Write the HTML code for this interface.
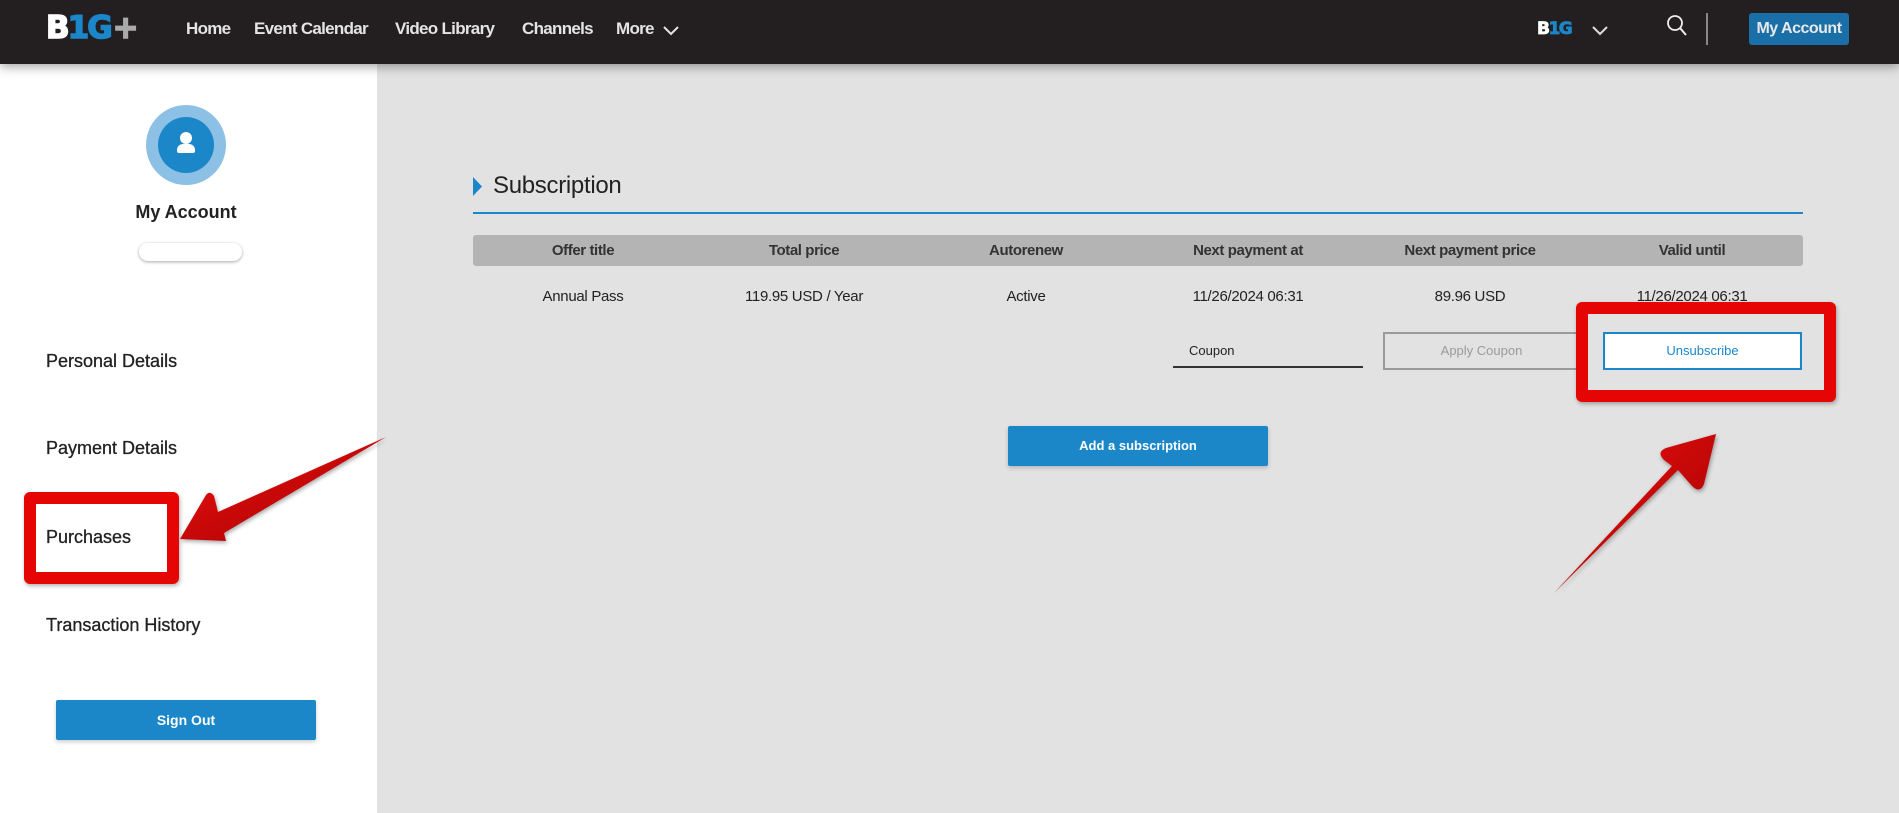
<!DOCTYPE html>
<html><head><meta charset="utf-8"><style>
*{box-sizing:border-box;margin:0;padding:0}
body{width:1899px;height:813px;overflow:hidden;background:#e2e2e2;font-family:"Liberation Sans",sans-serif;position:relative;color:#222}
.a{position:absolute}
.nav{left:0;top:0;width:1899px;height:64px;background:#231f20;box-shadow:0 3px 10px rgba(0,0,0,.35);z-index:5}
.nl{color:#e4e4e4;font-size:17px;font-weight:bold;top:19px;letter-spacing:-0.7px}
.side{left:0;top:64px;width:377px;height:749px;background:#fff}
.mi{left:46px;font-size:18px;color:#222;letter-spacing:0px;-webkit-text-stroke:0.3px #222}
.th{top:235px;font-size:15px;font-weight:bold;color:#333;transform:translateX(-50%);white-space:nowrap;letter-spacing:-0.4px;line-height:31px}
.td{top:288px;font-size:15px;color:#222;transform:translateX(-50%);white-space:nowrap;letter-spacing:-0.3px}
.lg{font-family:"DejaVu Sans","Liberation Sans",sans-serif;font-weight:900}
</style></head><body>
<div class="a nav">
  <div class="a lg" style="left:46px;top:13px;font-size:31px;letter-spacing:-2px;line-height:31px;-webkit-text-stroke:1.5px"><span style="color:#fff;-webkit-text-stroke-color:#fff">B</span><span style="color:#1b87c9;-webkit-text-stroke-color:#1b87c9">1G</span><span style="color:#aaa;margin-left:2px;-webkit-text-stroke-color:#aaa">+</span></div>
  <div class="a nl" style="left:186px">Home</div>
  <div class="a nl" style="left:254px">Event Calendar</div>
  <div class="a nl" style="left:395px">Video Library</div>
  <div class="a nl" style="left:522px">Channels</div>
  <div class="a nl" style="left:616px">More</div>
  <svg class="a" style="left:663px;top:25px" width="16" height="12"><path d="M1 2l7 7 7-7" stroke="#e4e4e4" stroke-width="2" fill="none"/></svg>
  <div class="a lg" style="left:1537px;top:21px;font-size:17px;letter-spacing:-1.5px;line-height:17px;-webkit-text-stroke:0.8px"><span style="color:#fff;-webkit-text-stroke-color:#fff">B</span><span style="color:#1b87c9;-webkit-text-stroke-color:#1b87c9">1G</span></div>
  <svg class="a" style="left:1592px;top:25px" width="16" height="12"><path d="M1 2l7 7 7-7" stroke="#ddd" stroke-width="2" fill="none"/></svg>
  <svg class="a" style="left:1666px;top:14px" width="22" height="24"><circle cx="9" cy="9" r="7" stroke="#eee" stroke-width="1.8" fill="none"/><path d="M14 14l6 7" stroke="#eee" stroke-width="2"/></svg>
  <div class="a" style="left:1706px;top:13px;width:2px;height:32px;background:#888"></div>
  <div class="a" style="left:1749px;top:13px;width:100px;height:32px;background:#1b6fa8;border-radius:3px;color:#e8e8e8;font-size:16px;font-weight:bold;text-align:center;line-height:32px;letter-spacing:-0.5px">My Account</div>
</div>
<div class="a side">
  <div class="a" style="left:146px;top:41px;width:80px;height:80px;border-radius:50%;background:#8cc1e5"></div>
  <div class="a" style="left:158px;top:53px;width:56px;height:56px;border-radius:50%;background:#1b87c9"></div>
  <div class="a" style="left:180px;top:68px;width:12px;height:12px;border-radius:50%;background:#fff"></div>
  <div class="a" style="left:177px;top:80px;width:18px;height:9px;border-radius:6px 6px 2px 2px;background:#fff"></div>
  <div class="a" style="left:0;width:372px;top:138px;text-align:center;font-size:18px;font-weight:bold;color:#222">My Account</div>
  <div class="a" style="left:139px;top:179px;width:103px;height:18px;border-radius:9px;background:#fff;box-shadow:0 1px 3px rgba(0,0,0,.35)"></div>
  <div class="a mi" style="top:287px">Personal Details</div>
  <div class="a mi" style="top:374px">Payment Details</div>
  <div class="a mi" style="top:463px">Purchases</div>
  <div class="a mi" style="top:551px">Transaction History</div>
  <div class="a" style="left:56px;top:636px;width:260px;height:40px;background:#1b87c9;border-radius:2px;color:#fff;font-weight:bold;font-size:14px;text-align:center;line-height:40px;box-shadow:0 2px 4px rgba(0,0,0,.2)">Sign Out</div>
</div>
<div class="a" style="left:24px;top:492px;width:155px;height:92px;border:12px solid #e50505;border-radius:6px;box-shadow:1px 2px 4px rgba(0,0,0,.3)"></div>

<svg class="a" style="left:472px;top:177px" width="12" height="20"><path d="M1 0L10 9.5 1 19z" fill="#1b87c9"/></svg>
<div class="a" style="left:493px;top:172px;font-size:24px;color:#222;letter-spacing:-0.3px">Subscription</div>
<div class="a" style="left:473px;top:212px;width:1330px;height:2px;background:#1b87c9"></div>
<div class="a" style="left:473px;top:235px;width:1330px;height:31px;background:#b4b4b4;border-radius:3px"></div>
<div class="a th" style="left:583px">Offer title</div>
<div class="a th" style="left:804px">Total price</div>
<div class="a th" style="left:1026px">Autorenew</div>
<div class="a th" style="left:1248px">Next payment at</div>
<div class="a th" style="left:1470px">Next payment price</div>
<div class="a th" style="left:1692px">Valid until</div>
<div class="a td" style="left:583px">Annual Pass</div>
<div class="a td" style="left:804px">119.95 USD / Year</div>
<div class="a td" style="left:1026px">Active</div>
<div class="a td" style="left:1248px">11/26/2024 06:31</div>
<div class="a td" style="left:1470px">89.96 USD</div>
<div class="a td" style="left:1692px">11/26/2024 06:31</div>
<div class="a" style="left:1189px;top:343px;font-size:13px;color:#222">Coupon</div>
<div class="a" style="left:1173px;top:366px;width:190px;height:1.5px;background:#333"></div>
<div class="a" style="left:1383px;top:332px;width:197px;height:38px;border:2px solid #9a9a9a;color:#9a9a9a;font-size:13px;text-align:center;line-height:34px">Apply Coupon</div>
<div class="a" style="left:1603px;top:332px;width:199px;height:38px;border:2px solid #1b87c9;background:#fff;color:#1b87c9;font-size:13px;text-align:center;line-height:34px">Unsubscribe</div>
<div class="a" style="left:1576px;top:302px;width:260px;height:100px;border:12px solid #e50505;border-radius:6px;box-shadow:1px 2px 4px rgba(0,0,0,.3)"></div>
<div class="a" style="left:1008px;top:426px;width:260px;height:40px;background:#1b87c9;border-radius:2px;color:#fff;font-weight:bold;font-size:13px;text-align:center;line-height:40px;box-shadow:0 2px 4px rgba(0,0,0,.2)">Add a subscription</div>

<svg class="a" style="left:0;top:0" width="1899" height="813">
<defs><linearGradient id="g" x1="0" y1="0" x2="1" y2="1"><stop offset="0" stop-color="#f01010"/><stop offset="1" stop-color="#a00000"/></linearGradient></defs>
<g style="filter:drop-shadow(1px 2px 2px rgba(0,0,0,.35))">
<path d="M180 539 L206 495 Q210 490 214 496 L218 512 L386 437 L224 533 L226 541 Z" fill="url(#g)"/>
<path d="M1554 593 L1678 470 L1692 486 Q1700 494 1704 484 L1716 434 L1666 448 Q1656 452 1664 460 L1672 466 Z" fill="url(#g)"/>
</g>
</svg>
</body></html>
